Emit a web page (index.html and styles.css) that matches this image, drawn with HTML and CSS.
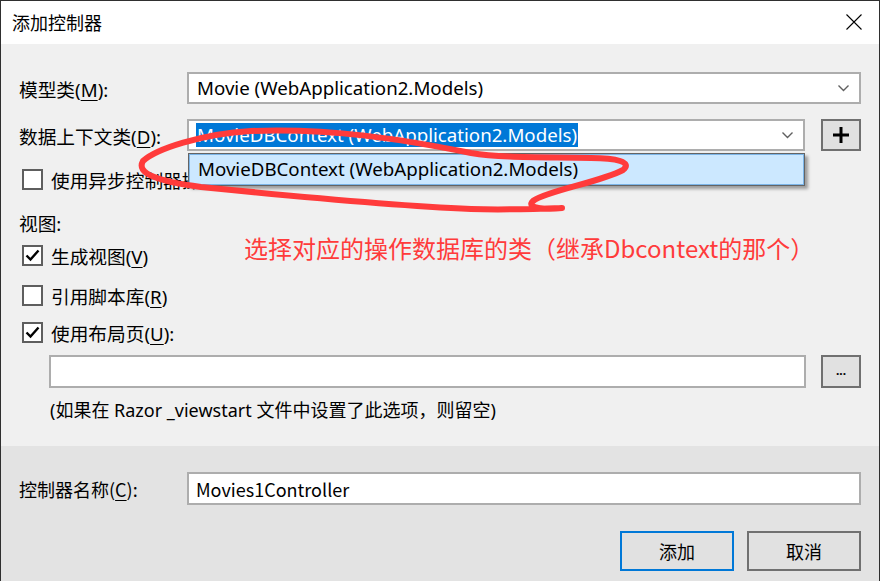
FILE: index.html
```html
<!DOCTYPE html>
<html lang="zh-CN">
<head>
    <meta charset="UTF-8">
    <title>添加控制器</title>
    <link rel="stylesheet" href="styles.css">
</head>
<body>
    <div class="dialog">
        <div class="titlebar">
            <span class="title">添加控制器</span>
            <svg class="close" width="16" height="16" viewBox="0 0 16 16">
                <path d="M0.5 0.5 L15.5 15.5 M15.5 0.5 L0.5 15.5" stroke="#000" stroke-width="1.1" fill="none"/>
            </svg>
        </div>

        <div class="content">
            <div class="row row-model">
                <label class="label">模型类(<u>M</u>):</label>
                <div class="combo">
                    <span class="combo-text">Movie (WebApplication2.Models)</span>
                    <svg class="chevron" width="11" height="7" viewBox="0 0 11 7"><path d="M0.5 0.5 L5.5 5.5 L10.5 0.5" stroke="#606060" stroke-width="1.4" fill="none"/></svg>
                </div>
            </div>

            <div class="row row-context">
                <label class="label">数据上下文类(<u>D</u>):</label>
                <div class="combo combo-context">
                    <span class="combo-text selected">MovieDBContext (WebApplication2.Models)</span>
                    <svg class="chevron" width="11" height="7" viewBox="0 0 11 7"><path d="M0.5 0.5 L5.5 5.5 L10.5 0.5" stroke="#606060" stroke-width="1.4" fill="none"/></svg>
                    <div class="dropdown">
                        <div class="option">MovieDBContext (WebApplication2.Models)</div>
                    </div>
                </div>
                <button class="btn-square">
                    <svg width="18" height="18" viewBox="0 0 18 18"><path d="M9 1 V17 M1 9 H17" stroke="#000" stroke-width="3" fill="none"/></svg>
                </button>
            </div>

            <div class="row row-check row-async">
                <span class="checkbox"></span>
                <span class="check-label">使用异步控制器操作</span>
            </div>

            <div class="row row-view">
                <span class="label">视图:</span>
            </div>

            <div class="row row-check row-gen">
                <span class="checkbox checked">
                    <svg width="17" height="17" viewBox="0 0 17 17"><path d="M2.5 8.5 L6.5 12.5 L14.5 3.5" stroke="#000" stroke-width="2.4" fill="none"/></svg>
                </span>
                <span class="check-label">生成视图(<u>V</u>)</span>
            </div>

            <div class="row row-check row-ref">
                <span class="checkbox"></span>
                <span class="check-label">引用脚本库(<u>R</u>)</span>
            </div>

            <div class="row row-check row-layout">
                <span class="checkbox checked">
                    <svg width="17" height="17" viewBox="0 0 17 17"><path d="M2.5 8.5 L6.5 12.5 L14.5 3.5" stroke="#000" stroke-width="2.4" fill="none"/></svg>
                </span>
                <span class="check-label">使用布局页(<u>U</u>):</span>
            </div>

            <div class="row row-path">
                <div class="textbox path-box"></div>
                <button class="btn-square btn-dots">...</button>
            </div>

            <div class="row row-note">
                <span class="note">(如果在 Razor _viewstart 文件中设置了此选项，则留空)</span>
            </div>

            <!-- red hand-drawn annotation -->
            <div class="remark">选择对应的操作数据库的类（继承Dbcontext的那个）</div>
            <svg class="scribble" width="880" height="300" viewBox="0 0 880 300">
                <path d="M561 207 C545 209 524 207 532 200 C545 190 600 181 622 169 C632 161 615 157 590 157 C540 156 500 157 470 152 C400 138 330 127 250 130 C200 133 155 148 142 160 C135 172 155 180 200 186 C280 194 380 204 470 208 C500 209 535 208 561 207"
                      stroke="#ff3b3b" stroke-width="6" fill="none" stroke-linecap="round" stroke-linejoin="round"/>
            </svg>
        </div>

        <div class="footer">
            <div class="row row-name">
                <label class="label label-name">控制器名称(<u>C</u>):</label>
                <div class="textbox name-box">Movies1Controller</div>
            </div>
            <div class="row row-actions">
                <button class="btn btn-default">添加</button>
                <button class="btn">取消</button>
            </div>
        </div>
    </div>
</body>
</html>
```

FILE: styles.css
```css
body {
    margin: 0;
    padding: 0;
    background: #f0f0f0;
    font-family: 'Noto Sans', 'Noto Sans CJK SC', sans-serif;
    color: #000;
}
u {
    text-decoration-thickness: 1px;
    text-underline-offset: 3px;
}
.dialog {
    width: 880px;
    height: 581px;
    box-sizing: border-box;
    border: 1px solid #2f2f2f;
    border-bottom: none;
    display: flex;
    flex-direction: column;
    position: relative;
    overflow: hidden;
}
.titlebar {
    height: 43px;
    background: #fff;
    display: flex;
    align-items: center;
    justify-content: space-between;
    padding: 0 17px 0 11px;
}
.title {
    font-family: 'Noto Sans CJK SC', sans-serif;
    font-size: 18px;
    margin-top: -1px;
}
.close {
    margin-top: -1px;
}

/* main area */
.content {
    height: 402px;
    background: #f0f0f0;
    padding: 0 18px;
    box-sizing: border-box;
    display: flex;
    flex-direction: column;
    font-size: 18.7px;
}
.row {
    display: flex;
    align-items: center;
}
.label {
    width: 168px;
    flex-shrink: 0;
}
.row-model {
    margin-top: 28px;
    height: 32px;
}
.row-context {
    margin-top: 15px;
    height: 32px;
}
.row-async {
    margin-top: 18px;
}
.row-view {
    margin-top: 20px;
    height: 24px;
}
.row-gen {
    margin-top: 11px;
}
.row-ref {
    margin-top: 19px;
}
.row-layout {
    margin-top: 16px;
}
.row-path {
    margin-top: 12px;
    height: 33px;
    padding-left: 30px;
}
.row-note {
    margin-top: 10px;
    height: 22px;
    padding-left: 31px;
}

.combo {
    flex: 1;
    height: 32px;
    box-sizing: border-box;
    border: 2px solid #adadad;
    background: #fff;
    display: flex;
    align-items: center;
    justify-content: space-between;
    padding: 0 10px 0 7px;
    position: relative;
}
.combo-context {
    flex: none;
    width: 618px;
    margin-right: 16px;
}
.combo-text {
    line-height: 24px;
    padding: 0 1px;
    white-space: nowrap;
}
.combo-text.selected {
    background: #0078d7;
    color: #fff;
}
.chevron {
    margin-top: 1px;
}

.dropdown {
    position: absolute;
    left: -1px;
    top: 32px;
    width: 617px;
    height: 33px;
    box-sizing: border-box;
    border: 1px solid #646464;
    background: #fff;
    box-shadow: 3px 3px 3px rgba(0, 0, 0, 0.35);
    z-index: 2;
}
.option {
    height: 31px;
    box-sizing: border-box;
    border: 1px solid #7cb5e8;
    background: #cce8ff;
    padding-left: 8px;
    line-height: 28px;
    white-space: nowrap;
}

.btn-square {
    width: 40px;
    height: 32px;
    box-sizing: border-box;
    border: 2px solid #707070;
    background: #e1e1e1;
    padding: 0;
    display: flex;
    align-items: center;
    justify-content: center;
}
.btn-dots {
    margin-left: 15px;
    height: 33px;
    font-size: 12px;
    font-weight: bold;
    font-family: 'Noto Sans', sans-serif;
    align-items: flex-end;
    padding-bottom: 7px;
}

.row-check {
    height: 21px;
    padding-left: 3px;
}
.checkbox {
    width: 21px;
    height: 21px;
    box-sizing: border-box;
    border: 2px solid #5e5e5e;
    background: #fff;
    display: flex;
    align-items: center;
    justify-content: center;
    margin-right: 8px;
}
.check-label {
    white-space: nowrap;
}

.textbox {
    height: 32px;
    box-sizing: border-box;
    border: 2px solid #adadad;
    background: #fff;
    display: flex;
    align-items: center;
    padding-left: 7px;
}
.path-box {
    width: 757px;
    height: 33px;
}
.note {
    font-size: 18px;
    white-space: nowrap;
}

.remark {
    position: absolute;
    left: 243px;
    top: 229px;
    color: #ff3b3b;
    font-family: 'Noto Sans CJK SC', sans-serif;
    font-size: 24px;
    white-space: nowrap;
}
.scribble {
    position: absolute;
    left: 0;
    top: 0;
    z-index: 3;
    pointer-events: none;
}

/* bottom strip */
.footer {
    flex: 1;
    background: #e3e3e3;
    padding: 0 18px;
    display: flex;
    flex-direction: column;
    font-family: 'Noto Sans CJK SC', sans-serif;
    font-size: 18px;
}
.row-name {
    margin-top: 26px;
    height: 33px;
}
.name-box {
    flex: 1;
    height: 33px;
}
.row-actions {
    margin-top: 26px;
    justify-content: flex-end;
    gap: 13px;
}
.btn {
    width: 114px;
    height: 40px;
    box-sizing: border-box;
    border: 2px solid #707070;
    background: #e1e1e1;
    font-family: 'Noto Sans CJK SC', sans-serif;
    font-size: 18px;
    padding: 0;
}
.btn-default {
    border-color: #0078d7;
}
```
